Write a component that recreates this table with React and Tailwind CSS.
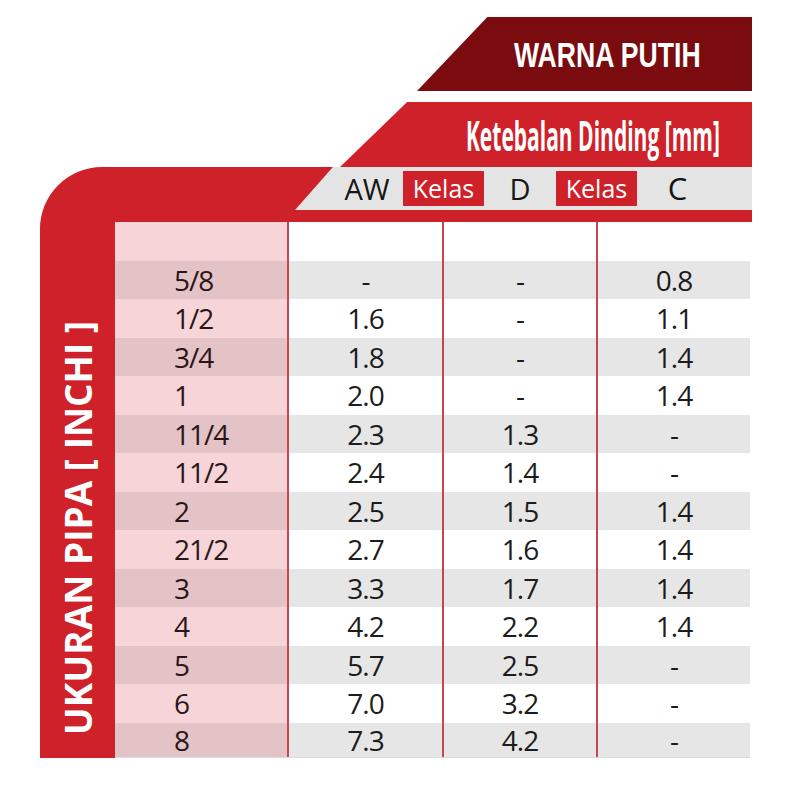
const rows = [
  ["5/8", "-", "-", "0.8"],
  ["1/2", "1.6", "-", "1.1"],
  ["3/4", "1.8", "-", "1.4"],
  ["1", "2.0", "-", "1.4"],
  ["11/4", "2.3", "1.3", "-"],
  ["11/2", "2.4", "1.4", "-"],
  ["2", "2.5", "1.5", "1.4"],
  ["21/2", "2.7", "1.6", "1.4"],
  ["3", "3.3", "1.7", "1.4"],
  ["4", "4.2", "2.2", "1.4"],
  ["5", "5.7", "2.5", "-"],
  ["6", "7.0", "3.2", "-"],
  ["8", "7.3", "4.2", "-"],
];

const Row = ({ cells, gray, last }) => (
  <div className={`flex text-[28px] font-medium tracking-[-1px] text-[#1c1c1c] ${last ? "h-[34px]" : "h-[38.5px]"}`}>
    <div
      className={`w-[174px] border-r-2 border-[#c5474d] pl-[59px] flex items-center text-[#2a1618] ${
        gray ? "bg-[#e4c3c7]" : "bg-[#f6d4d8]"
      }`}
    >
      {cells[0]}
    </div>
    <div className={`w-[155px] border-r-2 border-[#c5474d] flex items-center justify-center ${gray ? "bg-[#e6e6e6]" : "bg-white"}`}>
      {cells[1]}
    </div>
    <div className={`w-[154px] border-r-2 border-[#c5474d] flex items-center justify-center ${gray ? "bg-[#e6e6e6]" : "bg-white"}`}>
      {cells[2]}
    </div>
    <div className={`w-[152px] flex items-center justify-center ${gray ? "bg-[#e6e6e6]" : "bg-white"}`}>
      {cells[3]}
    </div>
  </div>
);

export default function App() {
  return (
    <div className="w-[800px] h-[800px] bg-white pt-[17px] font-['Open_Sans',sans-serif]">
      {/* title bar */}
      <div className="flex justify-end pr-[48px]">
        <div className="w-[335px] h-[74px] bg-[#7a0b0f] [clip-path:polygon(21%_0,100%_0,100%_100%,0_100%)] flex items-center justify-end pr-[51px]">
          <span className="inline-block origin-right scale-x-[0.76] text-white font-bold text-[35px] leading-none whitespace-nowrap font-['Liberation_Sans',sans-serif]">
            WARNA PUTIH
          </span>
        </div>
      </div>

      {/* sub title */}
      <div className="flex justify-end pr-[48px] mt-[11px]">
        <div className="w-[412px] h-[65px] bg-[#cf2129] [clip-path:polygon(16.3%_0,100%_0,100%_100%,0_100%)] flex items-center justify-end pr-[32px]">
          <span className="inline-block origin-right scale-x-[0.5] text-white font-bold text-[42px] leading-none whitespace-nowrap">
            Ketebalan Dinding [mm]
          </span>
        </div>
      </div>

      {/* table */}
      <div className="ml-[40px] w-[712px] bg-[#cf2129] rounded-tl-[62px] overflow-hidden">
        <div className="h-[43px] pl-[255px]">
          <div className="h-full bg-[#e4e4e4] [clip-path:polygon(8.3%_0,100%_0,100%_100%,0_100%)] flex items-center pl-[36px] text-[29px] text-[#161616]">
            <span className="w-[72px] text-center">AW</span>
            <span className="w-[81px] h-[35px] bg-[#cf2129] text-white text-[25px] flex items-center justify-center">Kelas</span>
            <span className="w-[72px] text-center">D</span>
            <span className="w-[81px] h-[35px] bg-[#cf2129] text-white text-[25px] flex items-center justify-center">Kelas</span>
            <span className="w-[81px] text-center text-[31px]">C</span>
          </div>
        </div>
        <div className="h-[12px]" />
        <div className="flex bg-white">
          <div className="w-[75px] bg-[#cf2129] flex items-end justify-center pb-[22px]">
            <span className="[writing-mode:vertical-rl] rotate-180 text-white font-bold text-[37px] leading-none whitespace-nowrap">
              UKURAN PIPA [ INCHI ]
            </span>
          </div>
          <div className="w-[635px] border-b border-[#dcdcdc]">
            <Row cells={["", "", "", ""]} gray={false} />
            {rows.map((r, i) => (
              <Row key={i} cells={r} gray={i % 2 === 0} last={i === rows.length - 1} />
            ))}
          </div>
        </div>
      </div>
    </div>
  );
}
